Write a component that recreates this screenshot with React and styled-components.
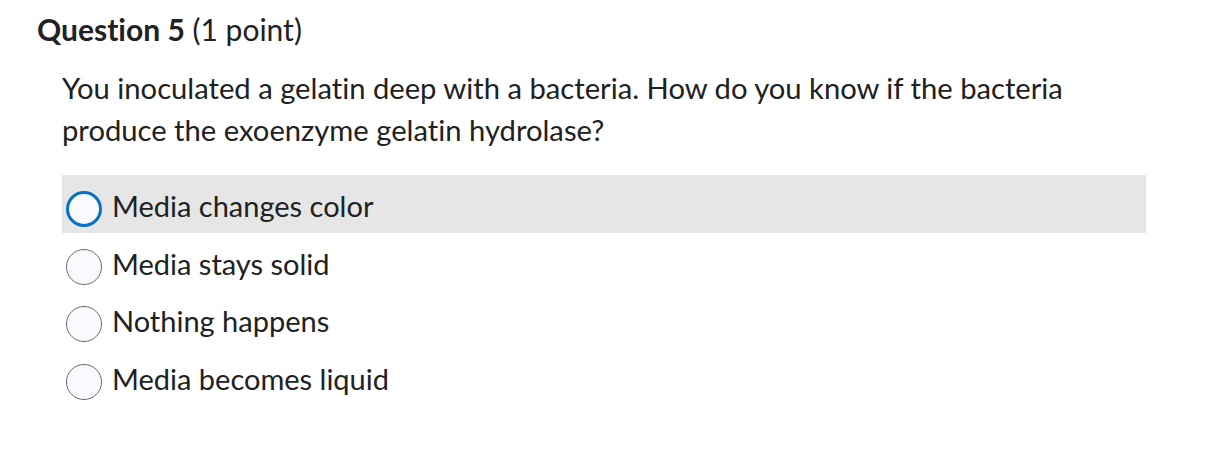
import styled, { createGlobalStyle } from "styled-components";

const GlobalStyle = createGlobalStyle`
  body {
    margin: 0;
    background: #ffffff;
    font-family: Lato, "Open Sans", sans-serif;
    color: #2d3b45;
  }
`;

const options = [
  "Media changes color",
  "Media stays solid",
  "Nothing happens",
  "Media becomes liquid",
];

const App = () => {
  return (
    <>
      <GlobalStyle />
      <StyledQuestion>
        <Title>
          <strong>Question 5</strong> (1 point)
        </Title>
        <Body>
          <Prompt>
            You inoculated a gelatin deep with a bacteria. How do you know if the
            bacteria produce the exoenzyme gelatin hydrolase?
          </Prompt>
          <Options>
            {options.map((text, i) => (
              <Option key={text} $hover={i === 0}>
                <Radio $focus={i === 0} />
                <Label>{text}</Label>
              </Option>
            ))}
          </Options>
        </Body>
      </StyledQuestion>
    </>
  );
};

const StyledQuestion = styled.div`
  padding: 11px 0 0 37px;
  width: 1109px;
  color: #202122;
  font-variant-ligatures: none;
`;

const Title = styled.h2`
  margin: 0;
  font-size: 30px;
  font-weight: 400;
  line-height: 36px;
  color: #202122;
  strong {
    font-weight: 700;
  }
`;

const Body = styled.div`
  padding: 20px 0 0 25px;
`;

const Prompt = styled.p`
  margin: 0;
  font-size: 29.2px;
  line-height: 42px;
  color: #202122;
  width: 1040px;
`;

const Options = styled.div`
  display: flex;
  flex-direction: column;
  margin-top: 24px;
`;

const Option = styled.label`
  display: flex;
  align-items: center;
  gap: 10px;
  height: 57.5px;
  padding-left: 4px;
  font-size: 29px;
  color: #202122;
  background: ${(p) => (p.$hover ? "#e6e6e6" : "transparent")};
`;

const Label = styled.span`
  padding-top: 4px;
`;

const Radio = styled.span`
  box-sizing: border-box;
  flex: none;
  width: 36px;
  height: 36px;
  margin-top: 11px;
  border-radius: 50%;
  background: #f9fafd;
  border: ${(p) => (p.$focus ? "3px solid #0770c4" : "1px solid #6b6b6b")};
`;

export default App;
